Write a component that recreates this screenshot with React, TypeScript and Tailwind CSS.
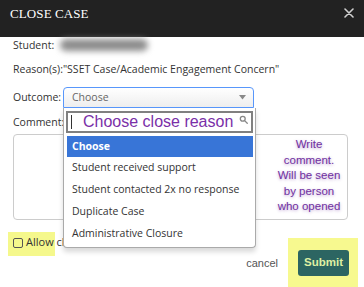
import React from "react";

export default function App() {
  const options = [
    "Student received support",
    "Student contacted 2x no response",
    "Duplicate Case",
    "Administrative Closure",
  ];
  return (
    <div className="relative w-[364px] h-[287px] overflow-hidden bg-white font-['Open_Sans',sans-serif] text-[10.5px] text-[#333]">
      {/* highlighter marks */}
      <div className="absolute left-[8px] top-[232px] w-[47px] h-[24px] bg-[#f5f88c]" />
      <div className="absolute left-[288px] top-[238px] w-[70px] h-[49px] bg-[#f7f98f]" />

      <div className="relative h-[37px] bg-[#222222] flex items-start justify-between pl-[10px] pr-[10px] pt-[6px]">
        <span className="font-['Liberation_Serif',serif] text-[13px] leading-[16px] text-white tracking-[0.1px]">
          CLOSE CASE
        </span>
        <svg width="10" height="10" viewBox="0 0 10 10" className="mt-[2px]">
          <path d="M1 1 L9 9 M9 1 L1 9" stroke="#d0d0d0" strokeWidth="1.6" strokeLinecap="round" />
        </svg>
      </div>

      <div className="relative px-[13px]">
        <div className="h-[16px] flex items-center leading-none">
          <span>Student:</span>
          <span className="ml-[6px] w-[88px] h-[12px] rounded-full bg-[#8c8c8c] blur-[3px]" />
        </div>
        <div className="mt-[8px] h-[16px] flex items-center leading-none whitespace-nowrap">
          Reason(s):"SSET Case/Academic Engagement Concern"
        </div>
        <div className="mt-[10px] flex items-center">
          <span className="w-[50px] leading-none">Outcome:</span>
          <div className="w-[191px] h-[21px] border border-[#5897fb] rounded-t-[4px] bg-gradient-to-b from-white to-[#eeeeee] flex items-center justify-between pl-[8px] pr-[7px]">
            <span className="text-[#666]">Choose</span>
            <svg width="7" height="5" viewBox="0 0 7 5">
              <path d="M0 0 L7 0 L3.5 4.5 Z" fill="#888" />
            </svg>
          </div>
        </div>
        <div className="mt-[7px] h-[14px] flex items-center leading-none">Comment:</div>
        <div className="mt-[5px] w-[335px] h-[86px] border border-[#cccccc] rounded-[4px] bg-white flex justify-end">
          <div className="w-[76px] pt-[2px] text-center font-['Liberation_Sans',Arial,sans-serif] text-[11.5px] leading-[15.5px] text-[#7030a0] [text-shadow:0_1px_3px_rgba(112,48,160,0.45)]">
            Write
            <br />
            comment.
            <br />
            Will be seen
            <br />
            by person
            <br />
            who opened
          </div>
        </div>
        <div className="mt-[12px] flex justify-between">
          <div className="h-[21px] flex items-center">
            <span className="w-[10px] h-[10px] border border-[#555] rounded-[2px] bg-transparent" />
            <span className="ml-[3px] text-[11px] text-[#333]">Allow close</span>
          </div>
          <div className="pt-[18px] mr-[2px] flex items-center gap-[20px]">
            <span className="font-['Liberation_Sans',Arial,sans-serif] text-[11px] text-[#555]">cancel</span>
            <div className="w-[51px] h-[26px] rounded-[3px] bg-[#2c6562] flex items-center justify-center font-['Liberation_Sans',Arial,sans-serif] font-bold text-[11.5px] text-[#dff0a2]">
              Submit
            </div>
          </div>
        </div>
      </div>

      {/* open dropdown */}
      <div className="absolute z-20 left-[63px] top-[108px] w-[193px] h-[140px] bg-white border border-[#aaaaaa] border-t-0 rounded-b-[4px] shadow-[0_4px_5px_rgba(0,0,0,0.15)]">
        <div className="mt-[3px] mx-[2px] h-[22px] border-2 border-[#808080] bg-white flex items-center">
          <span className="ml-[3px] w-[1px] h-[14px] bg-[#333]" />
          <span className="ml-[11px] font-['Liberation_Sans',Arial,sans-serif] text-[16px] leading-none text-[#7a2fa8] whitespace-nowrap">
            Choose close reason
          </span>
          <svg width="9" height="9" viewBox="0 0 24 24" className="ml-auto mr-[3px] mb-[5px]" fill="none" stroke="#888" strokeWidth="3.5">
            <circle cx="10" cy="10" r="6.5" />
            <path d="M15 15 L22 22" strokeLinecap="round" />
          </svg>
        </div>
        <div className="mt-[3px] ml-[3px] mr-[2px]">
          <div className="h-[21px] bg-[#3875d7] text-white font-bold flex items-center px-[5px]">Choose</div>
          {options.map((o) => (
            <div key={o} className="h-[22px] flex items-center px-[5px] text-[#333] whitespace-nowrap">
              {o}
            </div>
          ))}
        </div>
      </div>
    </div>
  );
}
